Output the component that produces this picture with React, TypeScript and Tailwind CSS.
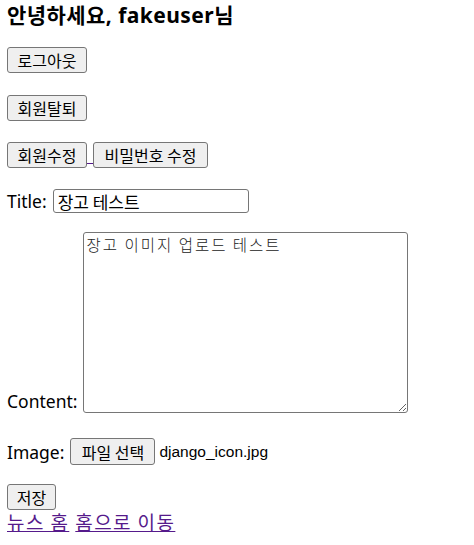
const btn =
  "h-[26px] px-[6px] border border-[#767676] bg-[#efefef] rounded-[3px] text-[16px] leading-[20px] text-black";
const latin = "font-['Noto_Sans','Noto_Sans_CJK_KR',sans-serif]";

export default function App() {
  return (
    <div className="min-h-[545px] bg-white pl-[7px] text-black font-['Noto_Sans_CJK_KR',sans-serif]">
      <h3 className={"text-[21px] font-bold leading-[30px] tracking-[0.45px] " + latin}>안녕하세요, fakeuser님</h3>

      <div className="mt-[17px] flex">
        <button className={btn + " w-[80px]"}>로그아웃</button>
      </div>

      <div className="mt-[22px] flex">
        <button className={btn + " w-[80px]"}>회원탈퇴</button>
      </div>

      <div className="mt-[21px] flex items-end">
        <button className={btn + " w-[80px]"}>회원수정</button>
        <span className="w-[6px] mb-[4px] border-b-[1.5px] border-[#551a8b]" />
        <button className={btn + " w-[115px]"}>비밀번호 수정</button>
      </div>

      <div className="mt-[21px] flex items-center text-[17.5px] leading-[24px]">
        <span className={latin}>Title:</span>
        <input
          className="ml-[6px] h-[24px] w-[196px] border border-[#767676] rounded-[3px] px-[4px] text-[17px] leading-[20px] outline-none"
          defaultValue="장고 테스트"
        />
      </div>

      <div className="mt-[19px] flex items-end">
        <span className={"text-[17.5px] leading-[24px] " + latin}>Content:</span>
        <textarea
          className="ml-[6px] h-[181px] w-[325px] border border-[#767676] rounded-[3px] px-[2px] py-[1px] text-[15.5px] leading-[20px] tracking-[2px] text-[#222] font-light resize-y outline-none"
          defaultValue="장고 이미지 업로드 테스트"
        />
      </div>

      <div className="mt-[25px] flex items-center text-[17.5px] leading-[24px]">
        <span className={latin}>Image:</span>
        <button className={btn + " ml-[6px] w-[85px] h-[27px]"}>파일 선택</button>
        <span className="ml-[4px] text-[15.5px] font-['Liberation_Sans',sans-serif]">django_icon.jpg</span>
      </div>

      <div className="mt-[19px] flex">
        <button className={btn + " w-[49px]"}>저장</button>
      </div>

      <div className="flex gap-[6px] text-[19px] leading-[24px] tracking-[1.4px] text-[#551a8b]">
        <a className="underline" href="#">뉴스 홈</a>
        <a className="underline" href="#">홈으로 이동</a>
      </div>
    </div>
  );
}
